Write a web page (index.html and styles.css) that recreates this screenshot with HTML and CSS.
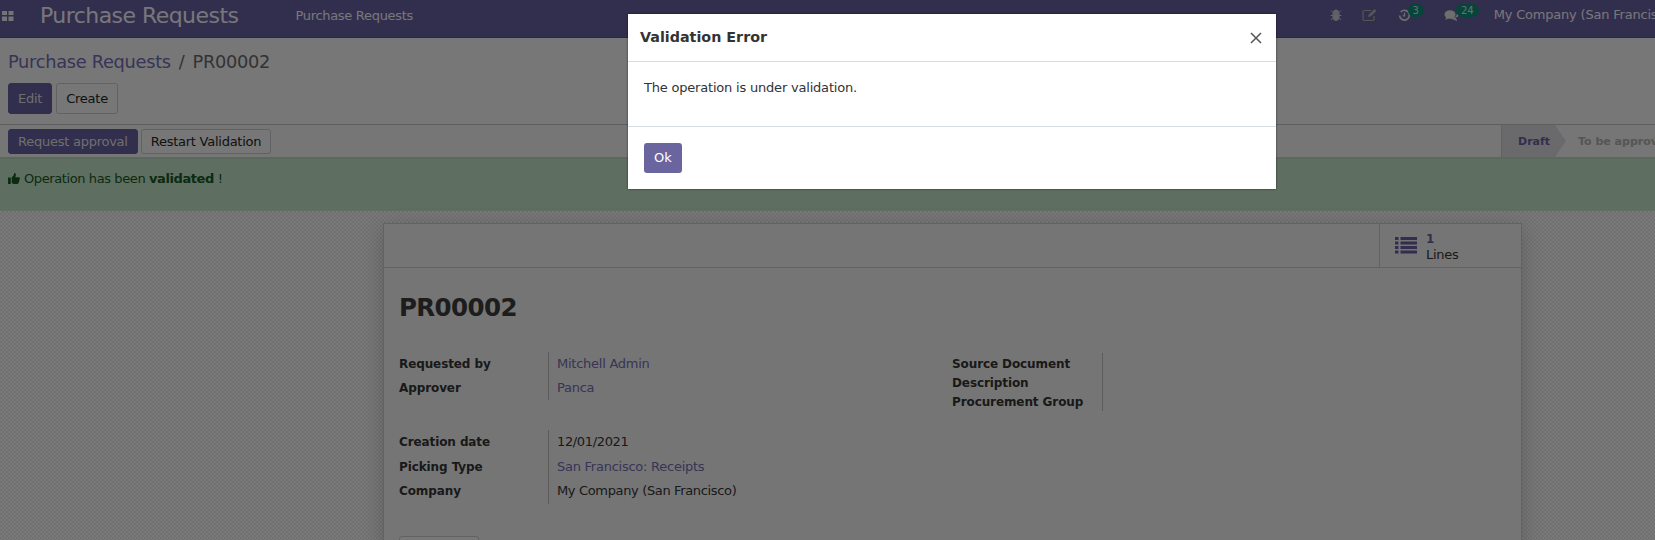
FILE: index.html
```html
<!DOCTYPE html>
<html lang="en">
<head>
<meta charset="utf-8">
<title>Purchase Requests</title>
<link rel="stylesheet" href="styles.css">
</head>
<body>
<div class="page">
  <header class="navbar">
    <svg class="apps" viewBox="0 0 12 10" width="12" height="10"><path d="M0 0h5v4H0zM6.500 0h5v4h-5zM0 5.500h5V10H0zM6.500 5.500h5V10h-5z" fill="#fff"/></svg>
    <span class="brand">Purchase Requests</span>
    <span class="menu">Purchase Requests</span>
    <div class="systray">
      <svg class="bug" viewBox="0 0 12 12" width="12" height="12"><path d="M3.500 3a2.500 2 0 0 1 5 0zM3 3.800h6V8a3 3.500 0 0 1-6 0zM1 1.500l2.500 2.500M11 1.500L8.500 4M.5 6.500H3M11.500 6.500H9M1 11l2-2.500M11 11L9 8.500" fill="#ddd" stroke="#ddd"/></svg>
      <svg class="edit" viewBox="0 0 16 14" width="16" height="14"><path d="M12 8v3a1.500 1.500 0 0 1-1.500 1.500h-8A1.500 1.500 0 0 1 1 11V4a1.500 1.500 0 0 1 1.500-1.500H9" fill="none" stroke="#aaa" stroke-width="1.200"/><path d="M6 9l.7-2.500L12.500 1 14.500 3 8.500 8.500z" fill="#aaa"/></svg>
      <span class="tray-item">
        <svg viewBox="0 0 14 14" width="13" height="13"><path d="M3 3.200A5.300 5.300 0 1 1 1.700 7" fill="none" stroke="#ddd" stroke-width="1.800"/><path d="M7 4v3.500H5" fill="none" stroke="#ddd" stroke-width="1.400"/></svg>
        <span class="badge">3</span>
      </span>
      <span class="tray-item chat">
        <svg viewBox="0 0 15 14" width="15" height="14"><ellipse cx="6" cy="5.500" rx="5.500" ry="4.200" fill="#ddd"/><path d="M2 8l-.5 3L5 9z" fill="#ddd"/><path d="M11 8.500c2 0 3.500-.8 3.500-2s-.6-1.800-1.500-2.200c0 3-3 5-6.500 5 1 1 2.500 1.500 4 1.400l2.500 1.800-.5-2.500z" fill="#ddd"/></svg>
        <span class="badge">24</span>
      </span>
      <span class="company">My Company (San Francisco)</span>
    </div>
  </header>

  <section class="control-panel">
    <nav class="breadcrumb"><a class="crumb-link">Purchase Requests</a><span class="crumb-sep">/</span><span class="crumb-current">PR00002</span></nav>
    <div class="cp-buttons">
      <button class="btn btn-primary tall">Edit</button>
      <button class="btn btn-secondary tall">Create</button>
    </div>
  </section>

  <section class="statusbar">
    <div class="actions">
      <button class="btn btn-primary short">Request approval</button>
      <button class="btn btn-secondary short">Restart Validation</button>
    </div>
    <div class="stages">
      <span class="stage current">Draft</span>
      <span class="stage">To be approved</span>
    </div>
  </section>

  <section class="alert">
    <svg viewBox="0 0 13 12" width="12" height="11"><path d="M0 5h3v7H0zM4 5l2.500-3V0c1.500 0 2.300 1 2 2.500L8 4.500h3.500c1.200 0 1.700 1 1.300 2l-1.300 4.300c-.3.800-1 1.200-1.800 1.200H6L4 11z" fill="#155724"/></svg>
    <span>Operation has been <b>validated</b> !</span>
  </section>

  <main class="sheet-bg">
    <article class="card">
      <div class="card-head">
        <div class="stat">
          <svg viewBox="0 0 22 18" width="22" height="18"><path d="M0 1h3.500v3H0zM5.500 1H22v3H5.500zM0 5.500h3.500v3H0zM5.500 5.500H22v3H5.500zM0 10h3.500v3H0zM5.500 10H22v3H5.500zM0 14.500h3.500v3H0zM5.500 14.500H22v3H5.500z" fill="#645c9c"/></svg>
          <div class="stat-text"><span class="stat-num">1</span><span>Lines</span></div>
        </div>
      </div>
      <div class="card-body">
        <h1 class="title">PR00002</h1>
        <div class="columns">
          <div class="left-col">
            <div class="group">
              <div class="row"><label>Requested by</label><a>Mitchell Admin</a></div>
              <div class="row"><label>Approver</label><a>Panca</a></div>
            </div>
            <div class="group second">
              <div class="row"><label>Creation date</label><span>12/01/2021</span></div>
              <div class="row"><label>Picking Type</label><a>San Francisco: Receipts</a></div>
              <div class="row"><label>Company</label><span>My Company (San Francisco)</span></div>
            </div>
          </div>
          <div class="right-col">
            <div class="row thin"><label>Source Document</label></div>
            <div class="row thin"><label>Description</label></div>
            <div class="row thin"><label>Procurement Group</label></div>
          </div>
        </div>
        <div class="tab-stub"></div>
      </div>
    </article>
  </main>
</div>

<div class="overlay"></div>

<div class="modal">
  <div class="modal-head">
    <h2>Validation Error</h2>
    <svg viewBox="0 0 12 12" width="12" height="12"><path d="M1 1l10 10M11 1L1 11" stroke="#555" stroke-width="1.500" fill="none"/></svg>
  </div>
  <div class="modal-body">The operation is under validation.</div>
  <div class="modal-foot"><button class="ok">Ok</button></div>
</div>
</body>
</html>
```
FILE: styles.css
```css
* { box-sizing: border-box; }
html, body { margin: 0; padding: 0; height: 540px; overflow: hidden; }
body { font-family: "DejaVu Sans", sans-serif; font-size: 13px; letter-spacing: -.25px; color: #333; position: relative; }
.page { width: 1655px; height: 540px; overflow: hidden; background: #eeeeee; }

.navbar { height: 38px; background: #645c9c; border-bottom: 1px solid #544c8a; display: flex; align-items: center; color: #fff; padding-left: 2px; white-space: nowrap; }
.apps { flex: none; margin-top: -6px; opacity: .85; }
.brand { font-size: 22px; margin-left: 26px; margin-top: -7px; letter-spacing: -.55px; opacity: .9; }
.menu { font-size: 13px; margin-left: 57px; margin-top: -7px; letter-spacing: -.3px; opacity: .9; }
.systray { margin-left: auto; margin-right: -22px; display: flex; align-items: center; flex: none; margin-top: -8px; }
.bug { margin-right: 20px; opacity: .8; }
.edit { margin-right: 20px; }
.tray-item { display: flex; align-items: flex-start; position: relative; }
.tray-item svg { margin-top: 2px; }
.badge { background: #0d8a74; color: #ddd; font-size: 10px; line-height: 13px; border-radius: 7px; padding: 0 5px; margin-left: -3px; margin-top: -3px; position: relative; letter-spacing: 0; }
.chat { margin-left: 20px; }
.company { margin-left: 15px; font-size: 13px; opacity: .9; letter-spacing: -.2px; }

.control-panel { height: 87px; border-bottom: 1px solid #bdbdbd; padding: 0 8px; background: #eeeeee; }
.breadcrumb { font-size: 17.800px; height: 45px; display: flex; align-items: center; letter-spacing: -.3px; padding-top: 1px; }
.crumb-link, a { color: #6f68ae; }
.crumb-sep { margin: 0 8px; color: #666; }
.crumb-current { color: #666; }
.cp-buttons { display: flex; gap: 4px; }
.btn { font: inherit; letter-spacing: -.25px; border-radius: 3px; padding: 0 9px; cursor: pointer; white-space: nowrap; }
.btn-primary { background: #645c9c; border: 1px solid #645c9c; color: #ddd; }
.btn-secondary { background: #eeeeee; border: 1px solid #c4c4c4; color: #212529; }
.tall { height: 31px; }
.short { height: 25px; }

.statusbar { height: 33px; border-bottom: 1px solid #c8c8c8; background: #ececec; display: flex; justify-content: space-between; padding-left: 8px; overflow: hidden; white-space: nowrap; }
.actions { display: flex; gap: 3px; align-items: center; }
.stages { display: flex; margin-right: -65px; font-size: 11px; font-weight: bold; align-items: stretch; letter-spacing: 0; }
.stage { display: flex; align-items: center; padding: 0 0 0 12px; color: #aaa; width: 154px; }
.stage.current { width: 65px; padding-left: 16px; background: #d4d4d8; color: #645c9c; clip-path: polygon(0 0, 54px 0, 65px 50%, 54px 100%, 0 100%); border-left: 1px solid #c4c4c4; }

.alert { height: 53px; background: #bcdcc0; color: #155724; padding: 12px 8px 0; display: flex; align-items: flex-start; gap: 4px; border-top: 1px solid #b0d0b5; letter-spacing: -.4px; }
.alert svg { margin-top: 2px; flex: none; }

.sheet-bg { height: 329px; padding: 12px 0 0 383px;
  background-color: #f0f0f0;
  background-image: repeating-conic-gradient(#e0e0e0 0 25%, #f2f2f2 0 50%);
  background-size: 4px 4px; }
.card { width: 1139px; height: 400px; background: #ebebeb; border: 1px solid #c4c4c4; box-shadow: 0 5px 20px -1px rgba(0,0,0,.2); }
.card-head { height: 44px; border-bottom: 1px solid #c4c4c4; display: flex; justify-content: flex-end; }
.stat { width: 142px; border-left: 1px solid #c4c4c4; padding: 12px 0 0 15px; display: flex; gap: 9px; line-height: 15px; }
.stat-text { display: flex; flex-direction: column; margin-top: -4px; }
.stat-num { color: #645c9c; font-weight: bold; font-size: 12px; }

.card-body { padding: 0 15px; }
.title { font-size: 24.500px; line-height: 34px; margin: 23px 0 0; font-weight: bold; color: #3a3a3a; letter-spacing: -.6px; }
.columns { display: flex; margin-top: 27px; }
.left-col { width: 553px; }
.right-col { border-right: 1px solid #b8b8b8; width: 151px; height: 58px; margin-top: 1px; padding-top: 2px; }
.second { margin-top: 30px; }
.second .row { height: 24.500px; }
.row { display: flex; height: 24px; align-items: center; line-height: 24px; }
.row label { width: 150px; font-weight: bold; font-size: 12px; letter-spacing: -.1px; color: #333; flex: none; height: 100%; border-right: 1px solid #b8b8b8; }
.row > a, .row > span { padding-left: 8px; }
.row > span { letter-spacing: -.35px; }
.thin { height: 19px; }
.thin label { border: 0; width: auto; line-height: 19px; }
.tab-stub { width: 80px; height: 30px; border: 1px solid #c4c4c4; border-radius: 3px; margin-top: 32px; background: #f0f0f0; }

.overlay { position: absolute; inset: 0; background: rgba(0,0,0,.5); }

.modal { position: absolute; left: 628px; top: 14px; width: 648px; height: 175px; background: #fff; box-shadow: 0 0 2px rgba(0,0,0,.6); display: flex; flex-direction: column; color: #333; }
.modal-head { height: 48px; border-bottom: 1px solid #d6dde3; display: flex; justify-content: space-between; align-items: center; padding: 0 14px 1px 12px; }
.modal-head h2 { margin: 0; font-size: 14.300px; font-weight: bold; color: #333; letter-spacing: 0; }
.modal-head svg { margin-top: 1px; }
.modal-body { height: 65px; border-bottom: 1px solid #d6dde3; padding: 16px 16px 0; line-height: 20px; letter-spacing: -.2px; }
.modal-foot { padding: 16px; }
.ok { font: inherit; width: 38px; height: 30px; padding: 0 0 2px; background: #6b659f; color: #fff; border: 0; border-radius: 3px; letter-spacing: 0; }
```
